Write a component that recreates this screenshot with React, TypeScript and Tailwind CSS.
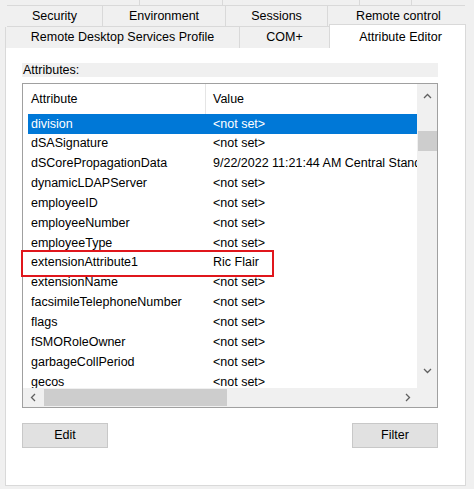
const rows: [string, string][] = [
  ["division", "<not set>"],
  ["dSASignature", "<not set>"],
  ["dSCorePropagationData", "9/22/2022 11:21:44 AM Central Standard Time"],
  ["dynamicLDAPServer", "<not set>"],
  ["employeeID", "<not set>"],
  ["employeeNumber", "<not set>"],
  ["employeeType", "<not set>"],
  ["extensionAttribute1", "Ric Flair"],
  ["extensionName", "<not set>"],
  ["facsimileTelephoneNumber", "<not set>"],
  ["flags", "<not set>"],
  ["fSMORoleOwner", "<not set>"],
  ["garbageCollPeriod", "<not set>"],
  ["gecos", "<not set>"],
];

function Chevron({ dir }: { dir: "up" | "down" | "left" | "right" }) {
  const pts = {
    up: "1,6 4.5,2.5 8,6",
    down: "1,3 4.5,6.5 8,3",
    left: "6,1 2.5,4.5 6,8",
    right: "3,1 6.5,4.5 3,8",
  }[dir];
  return (
    <svg width="9" height="9" viewBox="0 0 9 9">
      <polyline points={pts} fill="none" stroke="#606060" strokeWidth="1.3" />
    </svg>
  );
}

export default function App() {
  return (
    <div
      className="relative w-[474px] h-[489px] overflow-hidden bg-[#f0f0f0] text-[12.5px] text-black"
      style={{ fontFamily: '"Liberation Sans", Arial, sans-serif' }}
    >
      {/* cut-off tab row */}
      <div className="flex h-[6px] ml-[7px] w-[458px] border-b border-[#d9d9d9]">
        <div className="w-[133px] border-r border-[#d9d9d9]" />
        <div className="w-[83px] border-r border-[#d9d9d9]" />
        <div className="w-[137px] border-r border-[#d9d9d9]" />
        <div className="w-[52px] border-r border-[#d9d9d9]" />
        <div className="flex-1" />
      </div>

      {/* tab row 1 */}
      <div className="flex h-[21px] ml-[7px] w-[458px] border-b border-[#d9d9d9]">
        <div className="w-[96px] flex items-center justify-center border-r border-[#d9d9d9]">Security</div>
        <div className="w-[123px] flex items-center justify-center border-r border-[#d9d9d9]">Environment</div>
        <div className="w-[102px] flex items-center justify-center border-r border-[#d9d9d9]">Sessions</div>
        <div className="flex-1 flex items-center justify-center pl-[4px]">Remote control</div>
      </div>

      {/* tab row 2 */}
      <div className="flex items-end h-[21px] ml-[5px] w-[461px]">
        <div className="w-[235px] h-[21px] flex items-center justify-center border-l border-r border-[#d9d9d9]">
          Remote Desktop Services Profile
        </div>
        <div className="w-[89px] h-[21px] flex items-center justify-center">COM+</div>
        <div className="flex-1 h-[24px] bg-white flex items-start justify-center pt-[3px] pl-[6px] border-l border-t border-r border-[#d9d9d9]">
          Attribute Editor
        </div>
      </div>

      {/* panel */}
      <div className="ml-[5px] w-[461px] h-[438px] bg-white border-l border-r border-b border-[#d9d9d9] pt-[15px] pl-[16px]">
        <div className="w-[416px] h-[14px] bg-[#f0f0f0] flex items-center pl-[1px]">Attributes:</div>

        {/* list view */}
        <div className="mt-[6px] w-[416px] h-[325px] border border-[#a0a0a0] flex flex-col">
          <div className="flex flex-1 min-h-0">
            <div className="flex-1 flex flex-col min-w-0 overflow-hidden">
              <div className="flex h-[30px] shrink-0">
                <div className="w-[183px] pl-[8px] flex items-center border-r border-[#e5e5e5]">Attribute</div>
                <div className="pl-[7px] flex items-center">Value</div>
              </div>
              <div className="pl-[5px] flex flex-col">
                {rows.map(([name, value], i) => (
                  <div
                    key={name}
                    className={`flex h-[19.85px] shrink-0 items-center whitespace-nowrap ${
                      i === 0 ? "bg-[#0078d7] text-white" : ""
                    }`}
                  >
                    <div className="w-[178px] shrink-0 pl-[3px]">{name}</div>
                    <div className="pl-[7px]">{value}</div>
                  </div>
                ))}
              </div>
            </div>
            {/* vertical scrollbar */}
            <div className="w-[20px] bg-[#f0f0f0] flex flex-col items-center">
              <div className="h-[24px] flex items-center">
                <Chevron dir="up" />
              </div>
              <div className="mt-[23px] w-[19px] h-[20px] bg-[#cdcdcd]" />
              <div className="flex-1" />
              <div className="h-[22px] flex items-start">
                <Chevron dir="down" />
              </div>
            </div>
          </div>
          {/* horizontal scrollbar */}
          <div className="flex h-[19px] shrink-0 bg-[#f0f0f0]">
            <div className="w-[21px] flex items-center justify-center">
              <Chevron dir="left" />
            </div>
            <div className="w-[183px] my-[1px] bg-[#cdcdcd]" />
            <div className="flex-1" />
            <div className="w-[20px] flex items-center justify-center">
              <Chevron dir="right" />
            </div>
            <div className="w-[20px]" />
          </div>
        </div>

        {/* buttons */}
        <div className="mt-[15px] w-[416px] flex justify-between">
          <button className="w-[86px] h-[25px] bg-[#e1e1e1] border border-[#c8c8c8] flex items-center justify-center">
            Edit
          </button>
          <button className="w-[86px] h-[25px] bg-[#e1e1e1] border border-[#c8c8c8] flex items-center justify-center">
            Filter
          </button>
        </div>
      </div>

      {/* highlight box */}
      <div className="absolute left-[21px] top-[250px] w-[253px] h-[27px] border-2 border-[#e0161c]" />
    </div>
  );
}
